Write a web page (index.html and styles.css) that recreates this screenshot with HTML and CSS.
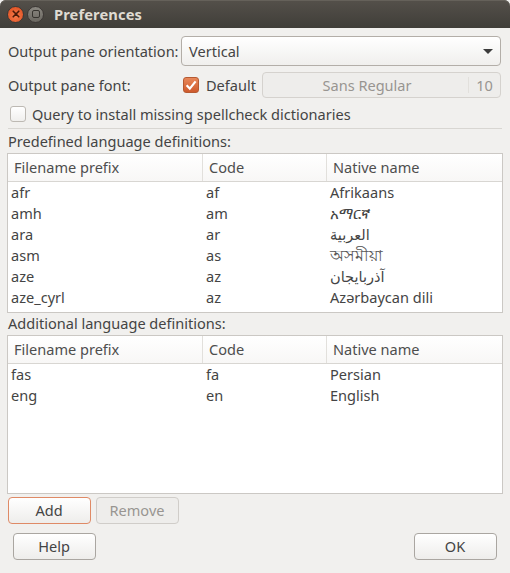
FILE: index.html
```html
<!DOCTYPE html>
<html lang="en">
<head>
<meta charset="utf-8">
<title>Preferences</title>
<link rel="stylesheet" href="styles.css">
</head>
<body>
<div class="window">
  <header class="titlebar">
    <span class="wbtn close"><svg viewBox="0 0 10 10" width="10" height="10"><path d="M2.2 2.2 7.8 7.8M7.8 2.2 2.2 7.8" stroke="#4a1a08" stroke-width="1.6" stroke-linecap="round"/></svg></span>
    <span class="wbtn max"><span class="maxbox"></span></span>
    <span class="title">Preferences</span>
  </header>
  <main class="content">
    <div class="row orient">
      <label class="lbl">Output pane orientation:</label>
      <div class="combo"><span>Vertical</span><svg class="arrow" viewBox="0 0 10 5" width="10" height="5"><path d="M0 0H10L5 5Z" fill="#3c3c3c"/></svg></div>
    </div>
    <div class="row fontrow">
      <label class="lbl fontlbl">Output pane font:</label>
      <span class="check on"><svg viewBox="0 0 16 16" width="16" height="16"><path d="M3.6 8.2 6.8 11.6 12.6 4.4" fill="none" stroke="#fff" stroke-width="2.2"/></svg></span>
      <span class="deflabel">Default</span>
      <div class="fontbtn"><span class="fname">Sans Regular</span><span class="fsize">10</span></div>
    </div>
    <div class="row queryrow">
      <span class="check"></span>
      <span class="lbl">Query to install missing spellcheck dictionaries</span>
    </div>
    <hr class="sep">
    <div class="sect">Predefined language definitions:</div>
    <div class="table t1">
      <div class="thead"><span>Filename prefix</span><span>Code</span><span>Native name</span></div>
      <div class="trow"><span>afr</span><span>af</span><span>Afrikaans</span></div>
      <div class="trow"><span>amh</span><span>am</span><span>አማርኛ</span></div>
      <div class="trow"><span>ara</span><span>ar</span><span>العربية</span></div>
      <div class="trow"><span>asm</span><span>as</span><span class="small">অসমীয়া</span></div>
      <div class="trow"><span>aze</span><span>az</span><span>آذربایجان</span></div>
      <div class="trow"><span>aze_cyrl</span><span>az</span><span>Azərbaycan dili</span></div>
    </div>
    <div class="sect second">Additional language definitions:</div>
    <div class="table t2">
      <div class="thead"><span>Filename prefix</span><span>Code</span><span>Native name</span></div>
      <div class="trow"><span>fas</span><span>fa</span><span>Persian</span></div>
      <div class="trow"><span>eng</span><span>en</span><span>English</span></div>
    </div>
    <div class="row addrow">
      <button class="btn focus">Add</button>
      <button class="btn off">Remove</button>
    </div>
    <div class="row actions">
      <button class="btn">Help</button>
      <button class="btn">OK</button>
    </div>
  </main>
</div>
</body>
</html>
```

FILE: styles.css
```css
* { box-sizing: border-box; }
html, body { margin: 0; padding: 0; }
body {
  width: 510px;
  height: 573px;
  overflow: hidden;
  background: #f1f0ee;
  font-family: "Noto Sans", "DejaVu Sans", sans-serif;
  font-size: 14.55px;
  color: #444444;
}
.window { height: 573px; display: flex; flex-direction: column; }
.titlebar {
  height: 28px;
  flex: none;
  display: flex;
  align-items: center;
  padding-left: 7px;
  background: linear-gradient(#54504a, #403e39);
  border-radius: 6px 6px 0 0;
  box-shadow: inset 0 1px 0 #65615a;
}
.wbtn {
  width: 17px; height: 17px; border-radius: 50%;
  display: flex; align-items: center; justify-content: center;
  margin-right: 3px;
}
.close { background: radial-gradient(circle at 50% 60%, #f47a4a, #dc4a1c); border: 1px solid #3c3835; }
.max { background: linear-gradient(#8a8780, #6a6760); border: 1px solid #3c3835; }
.maxbox { width: 8px; height: 8px; border: 1.5px solid #36342f; border-radius: 2px; }
.title { margin-left: 7px; font-weight: 700; font-size: 14.7px; color: #dfdbd2; letter-spacing: .1px; }
.content { flex: 1; display: flex; flex-direction: column; padding: 8px 7px 0 7px; }
.row { display: flex; align-items: center; }
.orient { height: 30px; padding-left: 1px; padding-right: 2px; }
.orient .lbl { width: 173px; flex: none; white-space: nowrap; }
.combo {
  flex: 1; height: 30px; display: flex; align-items: center; justify-content: space-between;
  padding: 0 7px 0 7px;
  border: 1px solid #b3aea8; border-radius: 4px;
  background: linear-gradient(#ffffff, #f0efed);
}
.arrow { display: block; }
.fontrow { height: 26px; margin-top: 6px; padding-left: 1px; padding-right: 2px; }
.fontlbl { width: 175px; flex: none; }
.check {
  width: 16px; height: 16px; flex: none; border-radius: 3px;
  border: 1px solid #bdb9b3;
  background: linear-gradient(#ffffff, #f0efed);
  display: block;
}
.check svg { display: block; margin: -1px; }
.check.on { background: linear-gradient(#e8885a, #cf5a2c); border-color: #b65a32; }
.deflabel { margin-left: 7px; width: 56px; flex: none; }
.fontbtn {
  flex: 1; height: 26px; display: flex; align-items: center;
  border: 1px solid #d5d2ce; border-radius: 4px; background: #eeedeb; color: #989591;
}
.fname { flex: 1; text-align: center; border-right: 1px solid #e2e0dc; line-height: 16px; padding-left: 3px; }
.fsize { width: 31px; text-align: center; }
.queryrow { margin-top: 5px; height: 22px; padding-left: 3px; }
.queryrow .lbl { margin-left: 6px; }
.sep { border: 0; height: 1px; background: #d8d6d2; margin: 3px 1px 0 1px; flex: none; }
.sect { height: 24px; line-height: 25px; padding-left: 1px; flex: none; }
.second { height: 22px; line-height: 21px; }
.table {
  flex: none; background: #fff;
  border: 1px solid #cbc8c4;
  width: 496px;
}
.t1 { height: 160px; }
.t2 { height: 159px; }
.thead, .trow { display: grid; grid-template-columns: 195px 124px 1fr; white-space: nowrap; }
.thead {
  height: 28px; line-height: 27px;
  background: linear-gradient(#fff, #f8f7f6);
  border-bottom: 1px solid #d8d6d2;
  color: #4e4e4e;
}
.thead span { padding-left: 6px; border-right: 1px solid #e2e0dc; }
.thead span:last-child { border-right: 0; }
.trow { height: 21px; line-height: 21px; }
.trow span { padding-left: 3px; overflow: hidden; }
.small { font-size: 16px; color: #555; }
.addrow { margin-top: 3px; padding-left: 1px; gap: 5px; }
.btn {
  width: 83px; height: 27px; padding: 0 1px 2px 0;
  border: 1px solid #aaa6a1; border-radius: 4px;
  background: linear-gradient(#ffffff, #eeedeb);
  font: inherit; color: #444444;
}
.btn.focus { border-color: #df8a66; }
.btn.off { background: #eeedeb; border-color: #d0cdc9; color: #989591; }
.actions { margin-top: 9px; padding: 0 6px; justify-content: space-between; }
```
